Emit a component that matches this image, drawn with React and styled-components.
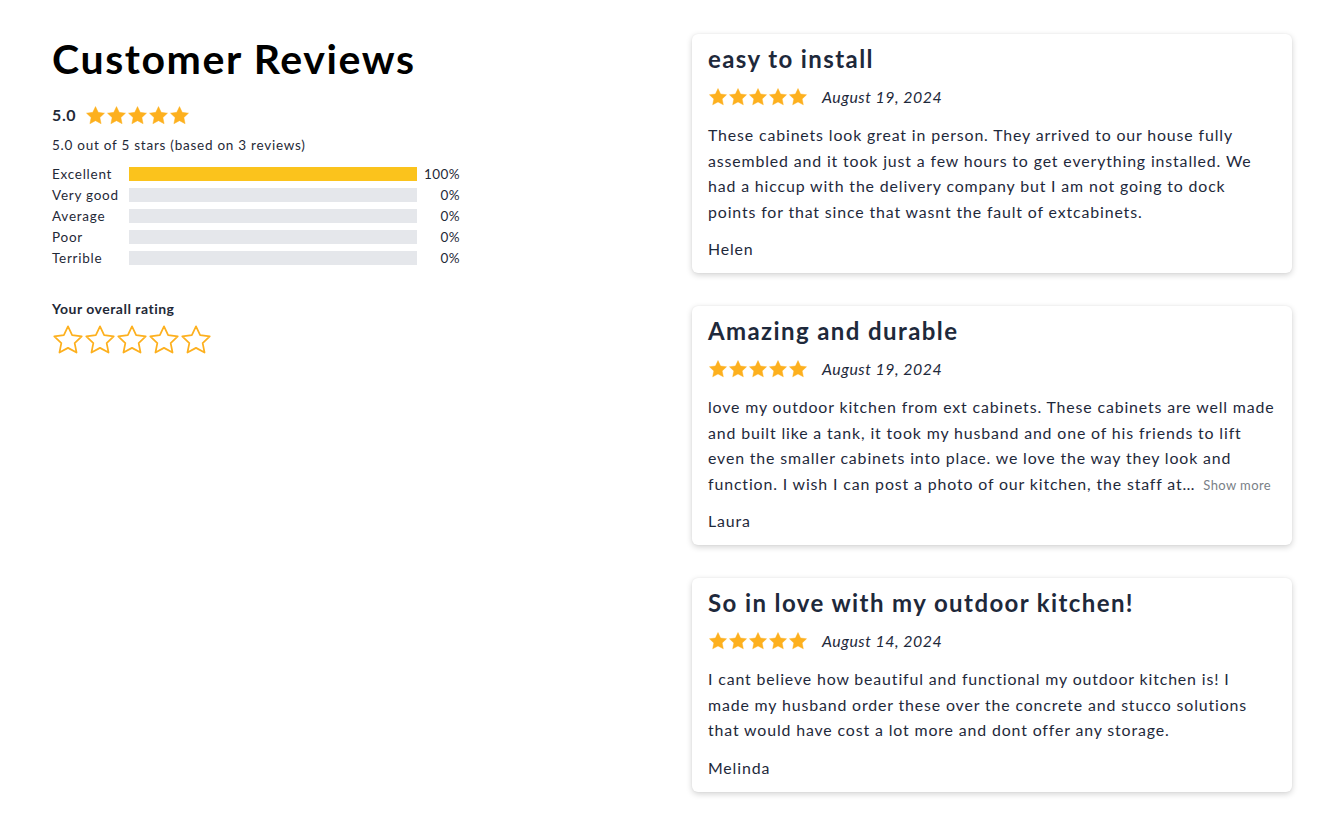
import React from "react";
import styled, { createGlobalStyle } from "styled-components";

const Global = createGlobalStyle`
  body { margin: 0; background: #fff; font-family: "Lato", "Open Sans", sans-serif; color: #1f2937; }
  * { box-sizing: border-box; }
`;

const Page = styled.div`
  max-width: 1240px;
  margin: 0 auto;
  padding-top: 34px;
  padding-bottom: 20px;
  display: grid;
  grid-template-columns: 600px 600px;
  column-gap: 40px;
  align-items: start;
`;

const Summary = styled.section`
  display: flex;
  flex-direction: column;
`;

const Title = styled.h1`
  margin: 0;
  font-size: 41px;
  font-weight: 700;
  letter-spacing: 1.6px;
  color: #000;
  line-height: 50px;
`;

const AvgRow = styled.div`
  display: flex;
  align-items: center;
  gap: 9px;
  margin-top: 20px;
  font-size: 16px;
  font-weight: 700;
  letter-spacing: 0.6px;
  line-height: 22px;
  color: #1f2937;
`;

const StarRow = styled.div`
  display: flex;
  align-items: center;
  gap: ${(p) => p.gap || 0}px;
`;

const SubText = styled.div`
  font-size: 13.5px;
  letter-spacing: 0.75px;
  line-height: 18px;
  margin-top: 10px;
  color: #1f2937;
`;

const Bars = styled.div`
  margin-top: 9px;
  display: flex;
  flex-direction: column;
  width: 408px;
`;

const BarRow = styled.div`
  display: grid;
  grid-template-columns: 77px 288px 43px;
  align-items: center;
  height: 21px;
  font-size: 13.5px;
  letter-spacing: 0.75px;
  color: #1f2937;
`;

const Track = styled.div`
  height: 14px;
  background: #e5e7eb;
`;

const Fill = styled.div`
  height: 100%;
  background: #fbc31c;
`;

const Pct = styled.span`
  text-align: right;
  letter-spacing: 0.4px;
`;

const RateLabel = styled.div`
  margin-top: 31px;
  font-size: 14px;
  font-weight: 700;
  letter-spacing: 0.5px;
  line-height: 19px;
  color: #1f2937;
`;

const RateStars = styled.div`
  margin-top: 6px;
  display: flex;
`;

const Reviews = styled.section`
  display: flex;
  flex-direction: column;
  gap: 33px;
`;

const Card = styled.article`
  background: #fff;
  border-radius: 6px;
  box-shadow: 0 2px 6px rgba(0, 0, 0, 0.18), 0 0 2px rgba(0, 0, 0, 0.06);
  padding: 10px 16px 12px;
`;

const CardTitle = styled.h3`
  margin: 0;
  font-size: 24px;
  font-weight: 700;
  letter-spacing: 1.4px;
  line-height: 30px;
  color: #1e293b;
`;

const Meta = styled.div`
  display: flex;
  align-items: center;
  gap: 14px;
  margin-top: 12px;
`;

const DateText = styled.span`
  font-style: italic;
  font-size: 15.9px;
  letter-spacing: 0.5px;
  line-height: 22px;
  color: #1e293b;
`;

const Body = styled.p`
  margin: 14px 0 0;
  font-size: 15.9px;
  letter-spacing: 0.86px;
  line-height: 25.5px;
  color: #1e293b;
`;

const More = styled.span`
  font-size: 13px;
  line-height: 1;
  letter-spacing: 0.4px;
  color: #7a7f87;
  margin-left: 8px;
`;

const Author = styled.div`
  margin-top: 13px;
  font-size: 15.9px;
  letter-spacing: 0.86px;
  line-height: 24px;
  color: #1e293b;
`;

const STAR = "M12 1.8l3.1 6.6 7.2.9-5.3 5 1.4 7.1L12 17.9l-6.4 3.5 1.4-7.1-5.3-5 7.2-.9z";

const Star = ({ size, filled = true }) => (
  <svg width={size} height={size} viewBox="0 0 24 24">
    <path
      d={STAR}
      fill={filled ? "#fdb01e" : "none"}
      stroke="#fdb01e"
      strokeWidth={filled ? 0.5 : 1.3}
      strokeLinejoin="round"
    />
  </svg>
);

const Stars = ({ size, count = 5, filled, gap }) => (
  <StarRow gap={gap}>
    {Array.from({ length: count }).map((_, i) => (
      <Star key={i} size={size} filled={filled} />
    ))}
  </StarRow>
);

const bars = [
  ["Excellent", 100],
  ["Very good", 0],
  ["Average", 0],
  ["Poor", 0],
  ["Terrible", 0],
];

const reviews = [
  {
    title: "easy to install",
    date: "August 19, 2024",
    body: "These cabinets look great in person. They arrived to our house fully assembled and it took just a few hours to get everything installed. We had a hiccup with the delivery company but I am not going to dock points for that since that wasnt the fault of extcabinets.",
    author: "Helen",
  },
  {
    title: "Amazing and durable",
    date: "August 19, 2024",
    body: "love my outdoor kitchen from ext cabinets. These cabinets are well made and built like a tank, it took my husband and one of his friends to lift even the smaller cabinets into place. we love the way they look and function. I wish I can post a photo of our kitchen, the staff at…",
    more: true,
    author: "Laura",
  },
  {
    title: "So in love with my outdoor kitchen!",
    date: "August 14, 2024",
    body: "I cant believe how beautiful and functional my outdoor kitchen is! I made my husband order these over the concrete and stucco solutions that would have cost a lot more and dont offer any storage.",
    author: "Melinda",
  },
];

export default function App() {
  return (
    <>
      <Global />
      <Page>
        <Summary>
          <Title>Customer Reviews</Title>
          <AvgRow>
            5.0 <Stars size={21} />
          </AvgRow>
          <SubText>5.0 out of 5 stars (based on 3 reviews)</SubText>
          <Bars>
            {bars.map(([label, pct]) => (
              <BarRow key={label}>
                <span>{label}</span>
                <Track>
                  <Fill style={{ width: `${pct}%` }} />
                </Track>
                <Pct>{pct}%</Pct>
              </BarRow>
            ))}
          </Bars>
          <RateLabel>Your overall rating</RateLabel>
          <RateStars>
            <Stars size={32} filled={false} />
          </RateStars>
        </Summary>
        <Reviews>
          {reviews.map((r) => (
            <Card key={r.title}>
              <CardTitle>{r.title}</CardTitle>
              <Meta>
                <Stars size={20} />
                <DateText>{r.date}</DateText>
              </Meta>
              <Body>
                {r.body}
                {r.more && <More>Show more</More>}
              </Body>
              <Author>{r.author}</Author>
            </Card>
          ))}
        </Reviews>
      </Page>
    </>
  );
}
